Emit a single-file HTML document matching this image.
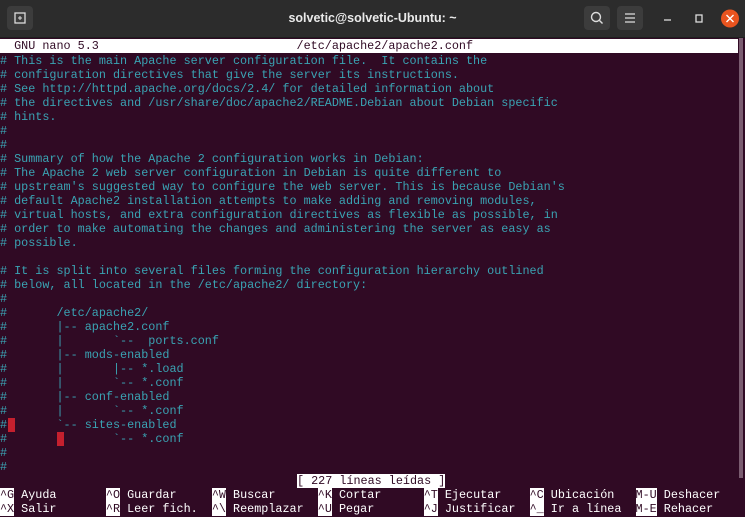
<!DOCTYPE html><html><head><meta charset="utf-8"><style>
*{margin:0;padding:0}
body{width:745px;height:517px;overflow:hidden;background:#300a24;position:relative;font-family:"Liberation Mono",monospace}
#tb{position:absolute;left:0;top:0;width:745px;height:37px;background:#2c2c2c;border-bottom:1px solid #1e1e1e}
.btn{position:absolute;top:6px;width:26px;height:24px;background:#3c3c3c;border-radius:4px}
#title{position:absolute;top:0;left:0;width:745px;text-align:center;color:#eaeaea;font:bold 12.5px/37px "Liberation Sans",sans-serif}
.l{position:absolute;left:0;height:14px;line-height:14px;font-size:11.78px;white-space:pre;color:#3aa3b3}
.inv{background:#fff;color:#300a24}
.k{background:#fff;color:#300a24}
.w{color:#fff}
.cur{position:absolute;background:#c4202e;width:7px;height:14px}
</style></head><body>
<div id="tb">
<div class="btn" style="left:7px"><svg width="26" height="24"><rect x="8" y="7" width="10" height="10" fill="none" stroke="#ddd" stroke-width="1.3"/><path d="M11 12h4M13 10v4" stroke="#ddd"/></svg></div>
<div id="title">solvetic@solvetic-Ubuntu: ~</div>
<div class="btn" style="left:584px"><svg width="26" height="24"><circle cx="12" cy="11" r="4.5" fill="none" stroke="#ddd" stroke-width="1.4"/><path d="M15.5 14.5l3 3" stroke="#ddd" stroke-width="1.4"/></svg></div>
<div class="btn" style="left:617px"><svg width="26" height="24"><path d="M8 8h10M8 12h10M8 16h10" stroke="#ddd" stroke-width="1.3"/></svg></div>
<svg style="position:absolute;left:660px;top:8px" width="85" height="22"><path d="M4 12h7" stroke="#ddd" stroke-width="1.3"/><rect x="36" y="7" width="6" height="7" fill="none" stroke="#ddd" stroke-width="1.3"/><circle cx="70" cy="10.5" r="9" fill="#e9541f"/><path d="M66.5 7l7 7M73.5 7l-7 7" stroke="#fff" stroke-width="1.4"/></svg>
</div>
<div class="l inv" style="top:39px;width:738px">  GNU nano 5.3                            /etc/apache2/apache2.conf</div>
<div style="position:absolute;left:739px;top:38px;width:4px;height:440px;background:#7a5c70"></div>
<div class="l" style="top:54px"># This is the main Apache server configuration file.  It contains the</div>
<div class="l" style="top:68px"># configuration directives that give the server its instructions.</div>
<div class="l" style="top:82px"># See http://httpd.apache.org/docs/2.4/ for detailed information about</div>
<div class="l" style="top:96px"># the directives and /usr/share/doc/apache2/README.Debian about Debian specific</div>
<div class="l" style="top:110px"># hints.</div>
<div class="l" style="top:124px">#</div>
<div class="l" style="top:138px">#</div>
<div class="l" style="top:152px"># Summary of how the Apache 2 configuration works in Debian:</div>
<div class="l" style="top:166px"># The Apache 2 web server configuration in Debian is quite different to</div>
<div class="l" style="top:180px"># upstream's suggested way to configure the web server. This is because Debian's</div>
<div class="l" style="top:194px"># default Apache2 installation attempts to make adding and removing modules,</div>
<div class="l" style="top:208px"># virtual hosts, and extra configuration directives as flexible as possible, in</div>
<div class="l" style="top:222px"># order to make automating the changes and administering the server as easy as</div>
<div class="l" style="top:236px"># possible.</div>
<div class="l" style="top:264px"># It is split into several files forming the configuration hierarchy outlined</div>
<div class="l" style="top:278px"># below, all located in the /etc/apache2/ directory:</div>
<div class="l" style="top:292px">#</div>
<div class="l" style="top:306px">#       /etc/apache2/</div>
<div class="l" style="top:320px">#       |-- apache2.conf</div>
<div class="l" style="top:334px">#       |       `--  ports.conf</div>
<div class="l" style="top:348px">#       |-- mods-enabled</div>
<div class="l" style="top:362px">#       |       |-- *.load</div>
<div class="l" style="top:376px">#       |       `-- *.conf</div>
<div class="l" style="top:390px">#       |-- conf-enabled</div>
<div class="l" style="top:404px">#       |       `-- *.conf</div>
<div class="l" style="top:418px">#       `-- sites-enabled</div>
<div class="l" style="top:432px">#               `-- *.conf</div>
<div class="cur" style="left:8px;top:418px"></div>
<div class="cur" style="left:57px;top:432px"></div>
<div class="l" style="top:446px">#</div>
<div class="l" style="top:460px">#</div>
<div class="l" style="top:474px;left:297px"><span class="inv">[ 227 líneas leídas ]</span></div>
<div class="l w" style="top:488px"><span class="k">^G</span> Ayuda       <span class="k">^O</span> Guardar     <span class="k">^W</span> Buscar      <span class="k">^K</span> Cortar      <span class="k">^T</span> Ejecutar    <span class="k">^C</span> Ubicación   <span class="k">M-U</span> Deshacer</div>
<div class="l w" style="top:502px"><span class="k">^X</span> Salir       <span class="k">^R</span> Leer fich.  <span class="k">^\</span> Reemplazar  <span class="k">^U</span> Pegar       <span class="k">^J</span> Justificar  <span class="k">^_</span> Ir a línea  <span class="k">M-E</span> Rehacer</div>
</body></html>
